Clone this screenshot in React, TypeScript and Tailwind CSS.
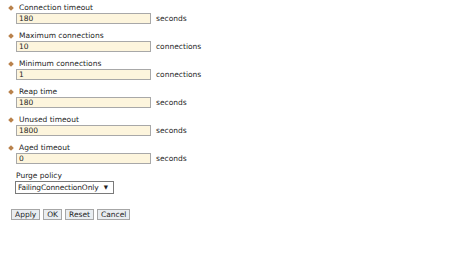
import React from 'react';

const fields = [
  { label: 'Connection timeout', value: '180', unit: 'seconds' },
  { label: 'Maximum connections', value: '10', unit: 'connections' },
  { label: 'Minimum connections', value: '1', unit: 'connections' },
  { label: 'Reap time', value: '180', unit: 'seconds' },
  { label: 'Unused timeout', value: '1800', unit: 'seconds' },
  { label: 'Aged timeout', value: '0', unit: 'seconds' },
];

const buttons = ['Apply', 'OK', 'Reset', 'Cancel'];

const App: React.FC = () => {
  return (
    <div className="w-[474px] h-[266px] bg-white text-[7.5px] text-[#1e1e1e] font-['DejaVu_Sans',sans-serif] pt-[3px] overflow-hidden">
      {fields.map((f) => (
        <div key={f.label} className="flex flex-col mb-[7px]">
          {/* label with required marker */}
          <div className="flex items-center h-[10px] pl-[9px]">
            <span className="w-[4px] h-[4px] bg-[#b9824c] rotate-45 mr-[6px]"></span>
            <span>{f.label}</span>
          </div>
          <div className="flex items-center pl-[16px] h-[11px]">
            <input
              readOnly
              defaultValue={f.value}
              className="w-[135px] h-[11px] bg-[#fdf5dd] border border-[#a8a8a8] px-[2px] text-[7.5px] leading-none text-[#1e1e1e] outline-none"
            />
            <span className="ml-[5px]">{f.unit}</span>
          </div>
        </div>
      ))}

      {/* Purge policy */}
      <div className="flex flex-col pl-[16px] mt-[1px]">
        <div className="h-[10px] flex items-center">Purge policy</div>
        <div className="flex items-center w-[99px] h-[13px] border border-[#7a7a7a] bg-white pl-[2px] -ml-[1px]">
          <span className="tracking-[-0.15px]">FailingConnectionOnly</span>
          <span className="text-[5.5px] ml-auto mr-[5px]">▼</span>
        </div>
      </div>

      <div className="flex gap-[3px] pl-[11px] mt-[15px]">
        {buttons.map((b) => (
          <button
            key={b}
            className="h-[11px] px-[3px] border border-[#a6a6a6] bg-[#e9edf1] text-[7.5px] leading-none text-[#1e1e1e]"
          >
            {b}
          </button>
        ))}
      </div>
    </div>
  );
};

export default App;
